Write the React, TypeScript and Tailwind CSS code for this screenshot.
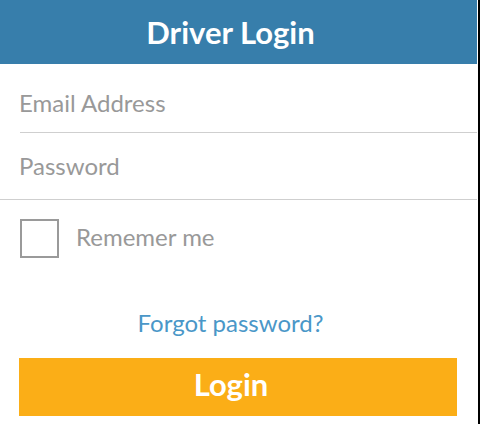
export default function App() {
  return (
    <div className="flex h-[424px] w-[480px] bg-white font-['Lato','Liberation_Sans',sans-serif]">
      <div className="flex w-[477px] flex-col">
        <div className="flex h-[64px] items-center bg-[#377eab] pr-[16px]">
          <h1 className="w-full text-center text-[31px] font-bold leading-none text-white">
            Driver Login
          </h1>
        </div>

        {/* Fields */}
        <div className="ml-[20px] flex h-[69px] items-center border-b border-[#cfcfcf] pt-[10px]">
          <input
            type="email"
            placeholder="Email Address"
            className="-ml-[1px] w-full bg-transparent text-[24px] text-[#999] outline-none placeholder:text-[#999]"
          />
        </div>
        <div className="flex h-[67px] items-center border-b border-[#cfcfcf] pl-[19px]">
          <input
            type="password"
            placeholder="Password"
            className="w-full bg-transparent text-[24px] text-[#999] outline-none placeholder:text-[#999]"
          />
        </div>

        <label className="mt-[19px] flex items-center gap-[17px] pl-[20px]">
          <span className="block h-[39px] w-[39px] border-2 border-[#9a9a9a]" />
          <span className="-mt-[3px] text-[24px] text-[#999]">Rememer me</span>
        </label>

        <div className="mt-[53px] pr-[16px] text-center leading-none">
          <a href="#" className="text-[24px] text-[#4a97c8]">
            Forgot password?
          </a>
        </div>

        <button className="ml-[19px] mt-[23px] h-[58px] w-[438px] bg-[#fbae17] pb-[5px] pr-[14px] text-[31px] font-bold leading-none text-white">
          Login
        </button>
      </div>
      <div className="ml-[1px] w-[2px] bg-black" />
    </div>
  );
}
